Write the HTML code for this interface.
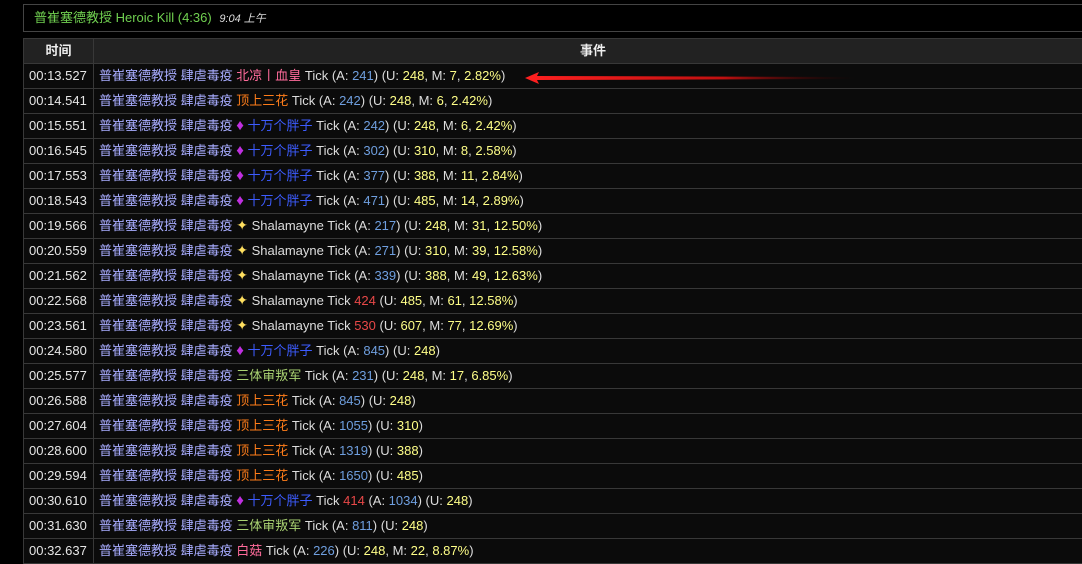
<!DOCTYPE html>
<html><head><meta charset="utf-8"><style>
body{margin:0;background:#000;width:1082px;height:550px;overflow:hidden;font-family:"Liberation Sans","Noto Sans CJK SC",sans-serif;font-size:13px;color:#ddd}
.hdr{position:absolute;left:23px;top:4px;width:1070px;height:28px;border:1px solid #444;box-sizing:border-box;background:#000;line-height:26px;padding-left:10px;color:#70d050}
.hdr i{color:#ddd;font-size:11px;margin-left:4px}
table{position:absolute;left:23px;top:38px;border-collapse:collapse;width:1070px}
td,th{border:1px solid #383838;height:24px;padding:0 5px;white-space:nowrap;background:#0b0b0b;line-height:16px}
th{background:#222;color:#eee;font-weight:bold;text-align:center;height:24px}
td:first-child{width:59px;color:#e6e6e6}
.n{color:#a8acff}.p{color:#ff6b9b}.o{color:#ff7d1a}.b{color:#3d5cff}.g{color:#abd473}
.a{color:#6f9fdf}.y{color:#ffff88}.r{color:#e84848}
.d{color:#c030e0;font-size:15px;line-height:14px}.s{color:#ffe060;font-size:14px;line-height:14px}
.arrow{position:absolute;left:525px;top:72px}
</style></head><body>
<div class="hdr">普崔塞德教授 Heroic Kill (4:36) <i>9:04 上午</i></div>
<table>
<tr><th>时间</th><th>事件</th></tr>
<tr><td>00:13.527</td><td><span class="n">普崔塞德教授 肆虐毒疫</span> <span class="p">北凉丨血皇</span> Tick (A: <span class="a">241</span>) (U: <span class="y">248</span>, M: <span class="y">7</span>, <span class="y">2.82%</span>)</td></tr>
<tr><td>00:14.541</td><td><span class="n">普崔塞德教授 肆虐毒疫</span> <span class="o">顶上三花</span> Tick (A: <span class="a">242</span>) (U: <span class="y">248</span>, M: <span class="y">6</span>, <span class="y">2.42%</span>)</td></tr>
<tr><td>00:15.551</td><td><span class="n">普崔塞德教授 肆虐毒疫</span> <span class="d">♦</span> <span class="b">十万个胖子</span> Tick (A: <span class="a">242</span>) (U: <span class="y">248</span>, M: <span class="y">6</span>, <span class="y">2.42%</span>)</td></tr>
<tr><td>00:16.545</td><td><span class="n">普崔塞德教授 肆虐毒疫</span> <span class="d">♦</span> <span class="b">十万个胖子</span> Tick (A: <span class="a">302</span>) (U: <span class="y">310</span>, M: <span class="y">8</span>, <span class="y">2.58%</span>)</td></tr>
<tr><td>00:17.553</td><td><span class="n">普崔塞德教授 肆虐毒疫</span> <span class="d">♦</span> <span class="b">十万个胖子</span> Tick (A: <span class="a">377</span>) (U: <span class="y">388</span>, M: <span class="y">11</span>, <span class="y">2.84%</span>)</td></tr>
<tr><td>00:18.543</td><td><span class="n">普崔塞德教授 肆虐毒疫</span> <span class="d">♦</span> <span class="b">十万个胖子</span> Tick (A: <span class="a">471</span>) (U: <span class="y">485</span>, M: <span class="y">14</span>, <span class="y">2.89%</span>)</td></tr>
<tr><td>00:19.566</td><td><span class="n">普崔塞德教授 肆虐毒疫</span> <span class="s">✦</span> Shalamayne Tick (A: <span class="a">217</span>) (U: <span class="y">248</span>, M: <span class="y">31</span>, <span class="y">12.50%</span>)</td></tr>
<tr><td>00:20.559</td><td><span class="n">普崔塞德教授 肆虐毒疫</span> <span class="s">✦</span> Shalamayne Tick (A: <span class="a">271</span>) (U: <span class="y">310</span>, M: <span class="y">39</span>, <span class="y">12.58%</span>)</td></tr>
<tr><td>00:21.562</td><td><span class="n">普崔塞德教授 肆虐毒疫</span> <span class="s">✦</span> Shalamayne Tick (A: <span class="a">339</span>) (U: <span class="y">388</span>, M: <span class="y">49</span>, <span class="y">12.63%</span>)</td></tr>
<tr><td>00:22.568</td><td><span class="n">普崔塞德教授 肆虐毒疫</span> <span class="s">✦</span> Shalamayne Tick <span class="r">424</span> (U: <span class="y">485</span>, M: <span class="y">61</span>, <span class="y">12.58%</span>)</td></tr>
<tr><td>00:23.561</td><td><span class="n">普崔塞德教授 肆虐毒疫</span> <span class="s">✦</span> Shalamayne Tick <span class="r">530</span> (U: <span class="y">607</span>, M: <span class="y">77</span>, <span class="y">12.69%</span>)</td></tr>
<tr><td>00:24.580</td><td><span class="n">普崔塞德教授 肆虐毒疫</span> <span class="d">♦</span> <span class="b">十万个胖子</span> Tick (A: <span class="a">845</span>) (U: <span class="y">248</span>)</td></tr>
<tr><td>00:25.577</td><td><span class="n">普崔塞德教授 肆虐毒疫</span> <span class="g">三体审叛军</span> Tick (A: <span class="a">231</span>) (U: <span class="y">248</span>, M: <span class="y">17</span>, <span class="y">6.85%</span>)</td></tr>
<tr><td>00:26.588</td><td><span class="n">普崔塞德教授 肆虐毒疫</span> <span class="o">顶上三花</span> Tick (A: <span class="a">845</span>) (U: <span class="y">248</span>)</td></tr>
<tr><td>00:27.604</td><td><span class="n">普崔塞德教授 肆虐毒疫</span> <span class="o">顶上三花</span> Tick (A: <span class="a">1055</span>) (U: <span class="y">310</span>)</td></tr>
<tr><td>00:28.600</td><td><span class="n">普崔塞德教授 肆虐毒疫</span> <span class="o">顶上三花</span> Tick (A: <span class="a">1319</span>) (U: <span class="y">388</span>)</td></tr>
<tr><td>00:29.594</td><td><span class="n">普崔塞德教授 肆虐毒疫</span> <span class="o">顶上三花</span> Tick (A: <span class="a">1650</span>) (U: <span class="y">485</span>)</td></tr>
<tr><td>00:30.610</td><td><span class="n">普崔塞德教授 肆虐毒疫</span> <span class="d">♦</span> <span class="b">十万个胖子</span> Tick <span class="r">414</span> (A: <span class="a">1034</span>) (U: <span class="y">248</span>)</td></tr>
<tr><td>00:31.630</td><td><span class="n">普崔塞德教授 肆虐毒疫</span> <span class="g">三体审叛军</span> Tick (A: <span class="a">811</span>) (U: <span class="y">248</span>)</td></tr>
<tr><td>00:32.637</td><td><span class="n">普崔塞德教授 肆虐毒疫</span> <span class="p">白菇</span> Tick (A: <span class="a">226</span>) (U: <span class="y">248</span>, M: <span class="y">22</span>, <span class="y">8.87%</span>)</td></tr>
</table>
<svg class="arrow" width="330" height="12" viewBox="0 0 330 12"><defs><linearGradient id="g" x1="0" x2="1"><stop offset="0" stop-color="#ff2020"/><stop offset="0.6" stop-color="#c01010"/><stop offset="1" stop-color="#300000" stop-opacity="0"/></linearGradient></defs><polygon points="0,6 14,0 12,4 330,5 330,7 12,8 14,12" fill="url(#g)"/></svg>
</body></html>
